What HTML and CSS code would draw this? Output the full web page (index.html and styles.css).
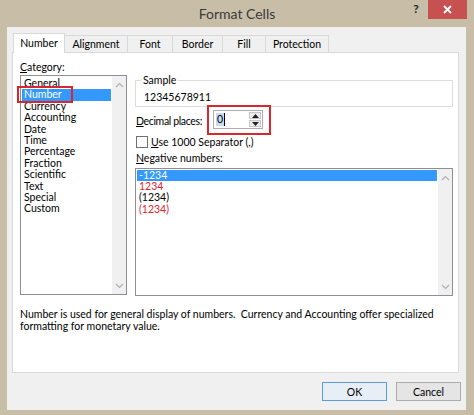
FILE: index.html
```html
<!DOCTYPE html>
<html>
<head>
<meta charset="utf-8">
<title>Format Cells</title>
<link rel="stylesheet" href="styles.css">
</head>
<body>
<div class="window">
  <div class="titlebar">
    <div class="title">Format Cells</div>
    <div class="controls">
      <div class="help">?</div>
      <div class="close">
        <svg width="9" height="9" viewBox="0 0 9 9"><path d="M1 1 L8 8 M8 1 L1 8" stroke="#fff" stroke-width="1.8"/></svg>
      </div>
    </div>
  </div>
  <div class="dialog">
    <div class="tabs">
      <div class="tab selected w-number">Number</div>
      <div class="tab w-align">Alignment</div>
      <div class="tab w-font">Font</div>
      <div class="tab w-border">Border</div>
      <div class="tab w-fill">Fill</div>
      <div class="tab last w-prot">Protection</div>
    </div>
    <div class="panel">
      <div class="columns">
        <div class="left">
          <div class="label"><u>C</u>ategory:</div>
          <div class="listbox cat">
            <div class="items">
              <div class="item">General</div>
              <div class="item active"><span class="mark">Number</span></div>
              <div class="item">Currency</div>
              <div class="item">Accounting</div>
              <div class="item">Date</div>
              <div class="item">Time</div>
              <div class="item">Percentage</div>
              <div class="item">Fraction</div>
              <div class="item">Scientific</div>
              <div class="item">Text</div>
              <div class="item">Special</div>
              <div class="item">Custom</div>
            </div>
            <div class="scrollbar">
              <svg width="9" height="6" viewBox="0 0 9 6"><path d="M1 5 L4.5 1.5 L8 5" fill="none" stroke="#b0b0b0" stroke-width="1.2"/></svg>
              <svg width="9" height="6" viewBox="0 0 9 6"><path d="M1 1 L4.5 4.5 L8 1" fill="none" stroke="#b0b0b0" stroke-width="1.2"/></svg>
            </div>
          </div>
        </div>
        <div class="right">
          <fieldset class="sample">
            <legend>Sample</legend>
            <div class="value">12345678911</div>
          </fieldset>
          <div class="decimal-row">
            <div class="dlabel"><u>D</u>ecimal places:</div>
            <div class="spin">
              <div class="spin-text"><span class="sel">0</span><span class="caret"></span></div>
              <div class="spin-btns">
                <div class="spin-btn"><svg width="7" height="4" viewBox="0 0 7 4"><path d="M0 4 L3.5 0 L7 4 Z" fill="#222"/></svg></div>
                <div class="spin-btn"><svg width="7" height="4" viewBox="0 0 7 4"><path d="M0 0 L3.5 4 L7 0 Z" fill="#222"/></svg></div>
              </div>
            </div>
          </div>
          <div class="check-row">
            <div class="checkbox"></div>
            <div><u>U</u>se 1000 Separator (,)</div>
          </div>
          <div class="label neg-label"><u>N</u>egative numbers:</div>
          <div class="listbox neg">
            <div class="items">
              <div class="item active">-1234</div>
              <div class="item red">1234</div>
              <div class="item">(1234)</div>
              <div class="item red">(1234)</div>
            </div>
            <div class="scrollbar">
              <svg width="9" height="6" viewBox="0 0 9 6"><path d="M1 5 L4.5 1.5 L8 5" fill="none" stroke="#b0b0b0" stroke-width="1.2"/></svg>
              <svg width="9" height="6" viewBox="0 0 9 6"><path d="M1 1 L4.5 4.5 L8 1" fill="none" stroke="#b0b0b0" stroke-width="1.2"/></svg>
            </div>
          </div>
        </div>
      </div>
      <p class="desc">Number is used for general display of numbers.&nbsp; Currency and Accounting offer specialized<br>formatting for monetary value.</p>
    </div>
    <div class="buttons">
      <div class="btn default">OK</div>
      <div class="btn">Cancel</div>
    </div>
  </div>
</div>
</body>
</html>
```

FILE: styles.css
```css
* { box-sizing: border-box; }
body {
  margin: 0;
  background: #c8bea8;
  font-family: Lato, "Noto Sans", sans-serif;
  font-size: 10.5px;
  color: #000;
}
.window {
  width: 474px;
  height: 415px;
  display: flex;
  flex-direction: column;
}
.titlebar {
  height: 27px;
  display: grid;
}
.titlebar > * { grid-area: 1 / 1; }
.title {
  justify-self: center;
  align-self: center;
  font-size: 14px;
  color: #3a3a3a;
  margin-top: -1px;
}
.controls {
  justify-self: end;
  align-self: start;
  display: flex;
  margin-right: 7px;
}
.help {
  width: 24px;
  height: 19px;
  line-height: 19px;
  text-align: center;
  font-weight: bold;
  font-size: 12px;
  color: #222;
  margin-top: -1px;
}
.close {
  width: 39px;
  height: 19px;
  background: #c75050;
  display: flex;
  align-items: center;
  justify-content: center;
}
.dialog {
  margin: 0 8px 0 7px;
  height: 383px;
  background: #f0f0f0;
  display: flex;
  flex-direction: column;
}
.tabs {
  height: 25px;
  display: flex;
  align-items: flex-end;
  padding-left: 6px;
  z-index: 1;
}
.tab {
  height: 17px;
  border: 1px solid #d9d9d9;
  border-bottom: none;
  border-right: none;
  background: #f0f0f0;
  display: flex;
  align-items: center;
  justify-content: center;
  padding-bottom: 1px;
}
.tab.last { border-right: 1px solid #d9d9d9; }
.tab.selected {
  height: 20px;
  margin-bottom: -1px;
  background: #fff;
  border-right: 1px solid #d9d9d9;
  padding-bottom: 2px;
}
.w-number { width: 52px; }
.w-align { width: 62px; border-left: none; }
.w-font { width: 45px; }
.w-border { width: 50px; }
.w-fill { width: 43px; }
.w-prot { width: 64px; }
.panel {
  margin-left: 5px;
  width: 447px;
  height: 321px;
  border: 1px solid #d9d9d9;
  background: #fff;
  padding: 8px 5px 0 7px;
}
.columns {
  display: flex;
  gap: 8px;
  align-items: flex-start;
}
.left { width: 107px; }
.label {
  height: 14px;
  line-height: 13px;
}
.listbox {
  border: 1px solid #8e8f94;
  display: flex;
  background: #fff;
}
.listbox .items {
  flex: 1;
  padding: 1px 1px 0 1px;
}
.listbox.cat { height: 220px; }
.listbox.cat .items { padding-top: 1.5px; }
.item {
  height: 11.4px;
  line-height: 11.4px;
  padding-left: 2px;
  white-space: nowrap;
}
.item.active {
  background: #3399ff;
  color: #fff;
}
.cat .item.active { height: 12px; }
.item.red { color: #e8212e; }
.mark { position: relative; }
.mark::after {
  content: "";
  position: absolute;
  left: -7px;
  right: -11px;
  top: -2px;
  bottom: -3px;
  border: 2px solid #d9262f;
}
.scrollbar {
  width: 14px;
  background: #f0f0f0;
  display: flex;
  flex-direction: column;
  justify-content: space-between;
  align-items: center;
  padding: 6px 0 5px;
}
.right {
  width: 318px;
  display: flex;
  flex-direction: column;
}
fieldset.sample {
  margin: 12px 0 0 0;
  padding: 3px 0 2px 5px;
  border: 1px solid #dcdcdc;
  min-width: 0;
}
fieldset.sample legend {
  padding: 0 2px;
  line-height: 14px;
}
.sample .value {
  margin-left: 3px;
  line-height: 14px;
}
.decimal-row {
  display: flex;
  align-items: center;
  margin-top: 3px;
}
.dlabel {
  width: 78px;
  padding-left: 1px;
  padding-top: 2px;
  white-space: nowrap;
  letter-spacing: -0.35px;
}
.spin {
  position: relative;
  width: 50px;
  height: 19px;
  border: 1px solid #abadb3;
  display: flex;
  background: #fff;
}
.spin::after {
  content: "";
  position: absolute;
  left: -7px;
  right: -9px;
  top: -6px;
  bottom: -7px;
  border: 2px solid #d9262f;
}
.spin-text {
  flex: 1;
  display: flex;
  align-items: center;
  padding-left: 2px;
}
.sel {
  background: #c7dcf2;
  line-height: 13px;
  padding: 0 1px;
}
.caret {
  width: 1px;
  height: 13px;
  background: #000;
}
.spin-btns {
  width: 14px;
  display: flex;
  flex-direction: column;
  padding: 1px;
  gap: 1px;
}
.spin-btn {
  flex: 1;
  background: #ececec;
  border: 1px solid #c8c8c8;
  display: flex;
  align-items: center;
  justify-content: center;
}
.check-row {
  display: flex;
  align-items: center;
  gap: 3px;
  margin-top: 6px;
  padding-left: 1px;
  height: 13px;
}
.checkbox {
  width: 12px;
  height: 12px;
  border: 1px solid #707070;
  background: #fff;
}
.neg-label { margin-top: 4px; padding-left: 1px; }
.listbox.neg {
  height: 128px;
  margin-top: 2px;
}
.listbox.neg .item { height: 11.3px; line-height: 11.3px; }
.listbox.neg .item.active { height: 11px; }
.desc {
  margin: 12px 0 0 0;
  line-height: 12px;
  white-space: nowrap;
}
.buttons {
  display: flex;
  justify-content: flex-end;
  gap: 9px;
  margin-top: 9px;
  padding-right: 5px;
}
.btn {
  width: 65px;
  height: 19px;
  border: 1px solid #acacac;
  background: #e5e5e5;
  display: flex;
  align-items: center;
  justify-content: center;
}
.btn.default {
  border: 1px solid #5b9be0;
  background: #e8eef5;
}
```
